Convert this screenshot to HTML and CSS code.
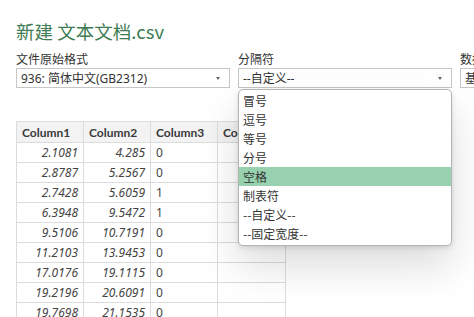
FILE: index.html
```html
<!DOCTYPE html>
<html lang="zh-CN">
<head>
<meta charset="utf-8">
<title>新建 文本文档.csv</title>
<link rel="stylesheet" href="styles.css">
</head>
<body>
<div class="page">
  <h1 class="title">新建 文本文档.csv</h1>
  <div class="fields">
    <div class="field">
      <div class="label">文件原始格式</div>
      <div class="select"><span>936: 简体中文(GB2312)</span><i class="arrow"></i></div>
    </div>
    <div class="field">
      <div class="label">分隔符</div>
      <div class="select"><span>--自定义--</span><i class="arrow"></i></div>
    </div>
    <div class="field narrow">
      <div class="label">数据类型检测</div>
      <div class="select"><span>基于前 200 行</span><i class="arrow"></i></div>
    </div>
  </div>
  <table class="grid">
    <thead>
      <tr><th>Column1</th><th>Column2</th><th>Column3</th><th>Column4</th></tr>
    </thead>
    <tbody>
      <tr><td class="num">2.1081</td><td class="num">4.285</td><td>0</td><td></td></tr>
      <tr><td class="num">2.8787</td><td class="num">5.2567</td><td>0</td><td></td></tr>
      <tr><td class="num">2.7428</td><td class="num">5.6059</td><td>1</td><td></td></tr>
      <tr><td class="num">6.3948</td><td class="num">9.5472</td><td>1</td><td></td></tr>
      <tr><td class="num">9.5106</td><td class="num">10.7191</td><td>0</td><td></td></tr>
      <tr><td class="num">11.2103</td><td class="num">13.9453</td><td>0</td><td></td></tr>
      <tr><td class="num">17.0176</td><td class="num">19.1115</td><td>0</td><td></td></tr>
      <tr><td class="num">19.2196</td><td class="num">20.6091</td><td>0</td><td></td></tr>
      <tr><td class="num">19.7698</td><td class="num">21.1535</td><td>0</td><td></td></tr>
    </tbody>
  </table>
  <ul class="menu">
    <li>冒号</li>
    <li>逗号</li>
    <li>等号</li>
    <li>分号</li>
    <li class="active">空格</li>
    <li>制表符</li>
    <li>--自定义--</li>
    <li>--固定宽度--</li>
  </ul>
</div>
</body>
</html>
```

FILE: styles.css
```css
html, body {
  margin: 0;
  padding: 0;
  background: #fff;
  overflow: hidden;
}
body {
  width: 474px;
  height: 317px;
  font-family: "Noto Sans", "Noto Sans CJK SC", sans-serif;
  color: #333;
}
.page {
  position: relative;
  padding: 0 0 0 16px;
  height: 317px;
  box-sizing: border-box;
}
.title {
  margin: 0;
  padding-top: 18px;
  height: 32px;
  font-size: 18.5px;
  line-height: 26px;
  font-weight: normal;
  color: #3d7b52;
  font-family: "Noto Sans CJK SC", "Noto Sans", sans-serif;
}
.fields {
  display: flex;
  gap: 8px;
}
.field {
  width: 214px;
  flex: none;
}
.label {
  font-family: "Noto Sans CJK SC", sans-serif;
  font-size: 12px;
  line-height: 18px;
  color: #333;
  white-space: nowrap;
}
.select {
  height: 20px;
  box-sizing: border-box;
  border: 1px solid #c6c6c6;
  background: #fff;
  display: flex;
  align-items: center;
  padding: 0 9px 0 4px;
  font-family: "Noto Sans", "Noto Sans CJK SC", sans-serif;
  font-size: 12px;
  color: #333;
  white-space: nowrap;
  overflow: hidden;
}
.select span { flex: 1; }
.arrow {
  width: 0;
  height: 0;
  border-left: 2.5px solid transparent;
  border-right: 2.5px solid transparent;
  border-top: 3px solid #666;
}
.grid {
  margin-top: 33px;
  border-collapse: collapse;
  table-layout: fixed;
  width: 269px;
  font-size: 12px;
  font-family: "Noto Sans", sans-serif;
}
.grid th, .grid td {
  width: 67px;
  height: 20px;
  box-sizing: border-box;
  border: 1px solid #dcdcdc;
  padding: 0 5px;
  overflow: hidden;
  white-space: nowrap;
}
.grid th:last-child, .grid td:last-child { width: 68px; }
.grid thead th {
  height: 21px;
  background: #f3f3f3;
  text-align: left;
  font-family: "Lato", "Noto Sans", sans-serif;
  font-weight: bold;
  color: #3a3a3a;
  font-size: 12px;
}
.grid td {
  color: #444;
  text-align: left;
}
.grid td.num {
  text-align: right;
  font-style: italic;
}
.menu {
  position: absolute;
  left: 238px;
  top: 89px;
  width: 214px;
  margin: 0;
  padding: 1px 0 2px;
  list-style: none;
  box-sizing: border-box;
  background: #fff;
  border: 1px solid #b4b4b4;
  border-radius: 5px;
  box-shadow: 0 20px 40px rgba(0, 0, 0, 0.14), 0 2px 5px rgba(0, 0, 0, 0.12);
  font-family: "Noto Sans CJK SC", sans-serif;
  font-size: 12px;
  color: #333;
}
.menu li {
  height: 19px;
  line-height: 19px;
  padding-left: 4px;
}
.menu li.active {
  background: #98d1b0;
}
```
